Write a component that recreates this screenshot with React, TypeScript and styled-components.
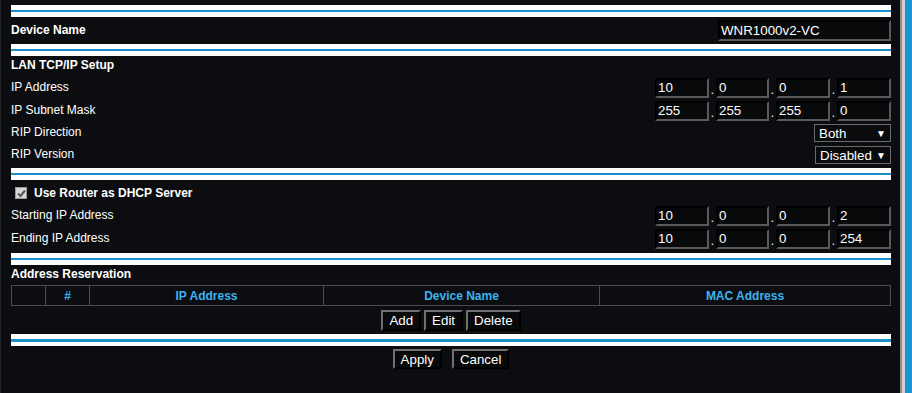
import React from "react";
import styled, { createGlobalStyle } from "styled-components";

const Global = createGlobalStyle`
  html, body { margin: 0; padding: 0; background: #0c0d10; }
  body { font-family: "Liberation Sans", Arial, sans-serif; color: #ffffff; }
  * { box-sizing: border-box; }
`;

const Page = styled.div`
  display: flex;
  width: 912px;
  height: 393px;
  overflow: hidden;
  background: #0c0d10;
`;

const Main = styled.div`
  width: 900px;
  height: 100%;
  border-left: 1px solid #222327;
  padding: 5px 0 0 10px;
`;

const Frame = styled.div`
  width: 12px;
  height: 100%;
  background: linear-gradient(
    to right,
    #8e8e8e 0 2px,
    #d0d0d0 2px 5px,
    #1a95d0 5px 12px
  );
`;

const Content = styled.div`
  width: 880px;
  display: flex;
  flex-direction: column;
`;

const Sep = styled.div<{ $mt?: number }>`
  height: 12px;
  margin-top: ${(p) => p.$mt ?? 0}px;
  background: linear-gradient(
    to bottom,
    #ffffff 0 5px,
    #1990cc 5px 7.5px,
    #ffffff 7.5px 12px
  );
`;

const Row = styled.div<{ $h: number; $pt?: number }>`
  display: flex;
  align-items: center;
  justify-content: space-between;
  height: ${(p) => p.$h}px;
  padding-top: ${(p) => p.$pt ?? 0}px;
`;

const Label = styled.span<{ $bold?: boolean }>`
  font-size: 12px;
  font-weight: ${(p) => (p.$bold ? "bold" : "normal")};
  color: #ffffff;
  padding-bottom: 2px;
`;

const TextInput = styled.input<{ $w: number; $h: number }>`
  width: ${(p) => p.$w}px;
  height: ${(p) => p.$h}px;
  margin: 0;
  padding: 0 1px;
  background: #08090b;
  color: #ffffff;
  font-family: "Liberation Sans", Arial, sans-serif;
  font-size: 13.333px;
  border-style: solid;
  border-width: 2px;
  border-color: #000000 #5a5a5a #5a5a5a #000000;
  outline: none;
`;

const IpGroup = styled.div`
  display: grid;
  grid-template-columns: 54px 7px 53px 7px 54px 7px 54px;
  align-items: end;
  height: 20px;
`;

const Dot = styled.span`
  font-size: 12px;
  line-height: 10px;
  text-align: center;
  color: #ffffff;
  padding-bottom: 3px;
`;

const Select = styled.div<{ $w: number }>`
  width: ${(p) => p.$w}px;
  height: 18px;
  border: 1px solid #6a6a6a;
  background: #0a0b0d;
  display: flex;
  align-items: center;
  justify-content: space-between;
  padding: 0 4px 0 4px;
  font-size: 13.333px;
  color: #ffffff;
`;

const Arrow = styled.span`
  font-size: 10px;
  color: #ffffff;
`;

const CheckLine = styled.label`
  display: flex;
  align-items: center;
  gap: 7px;
  padding-left: 4px;
  padding-bottom: 2px;
  font-size: 12px;
  font-weight: bold;
`;

const CheckBox = styled.span`
  display: flex;
  align-items: center;
  justify-content: center;
  width: 12px;
  height: 12px;
  background: #d6d6d6;
  border: 1px solid #9a9a9a;
`;

const Table = styled.table`
  width: 879px;
  border-collapse: collapse;
  table-layout: fixed;
`;

const Th = styled.th<{ $w: number }>`
  width: ${(p) => p.$w}px;
  height: 20px;
  padding: 0;
  border: 1px solid #4d4d4d;
  color: #3db3f0;
  font-size: 12px;
  font-weight: bold;
  text-align: center;
  vertical-align: middle;
`;

const ButtonRow = styled.div<{ $h: number; $pt: number; $gap: number }>`
  display: flex;
  justify-content: center;
  gap: ${(p) => p.$gap}px;
  height: ${(p) => p.$h}px;
  padding-top: ${(p) => p.$pt}px;
`;

const Button = styled.button<{ $h: number }>`
  height: ${(p) => p.$h}px;
  margin: 0;
  padding: 0 6px;
  background: #08090b;
  color: #ffffff;
  font-family: "Liberation Sans", Arial, sans-serif;
  font-size: 13.333px;
  border-style: solid;
  border-width: 2px;
  border-color: #707070 #000000 #000000 #707070;
  cursor: pointer;
`;

const Ip = ({ v }: { v: string[] }) => (
  <IpGroup>
    <TextInput $w={54} $h={20} defaultValue={v[0]} />
    <Dot>.</Dot>
    <TextInput $w={53} $h={20} defaultValue={v[1]} />
    <Dot>.</Dot>
    <TextInput $w={54} $h={20} defaultValue={v[2]} />
    <Dot>.</Dot>
    <TextInput $w={54} $h={20} defaultValue={v[3]} />
  </IpGroup>
);

export default function App() {
  return (
    <>
      <Global />
      <Page>
        <Main>
          <Content>
            <Sep />
            <Row $h={27}>
              <Label $bold>Device Name</Label>
              <TextInput $w={173} $h={21} defaultValue="WNR1000v2-VC" />
            </Row>
            <Sep />
            <Row $h={20}>
              <Label $bold>LAN TCP/IP Setup</Label>
            </Row>
            <Row $h={23}>
              <Label>IP Address</Label>
              <Ip v={["10", "0", "0", "1"]} />
            </Row>
            <Row $h={23}>
              <Label>IP Subnet Mask</Label>
              <Ip v={["255", "255", "255", "0"]} />
            </Row>
            <Row $h={22}>
              <Label>RIP Direction</Label>
              <Select $w={77}>
                <span>Both</span>
                <Arrow>▼</Arrow>
              </Select>
            </Row>
            <Row $h={22}>
              <Label>RIP Version</Label>
              <Select $w={76}>
                <span>Disabled</span>
                <Arrow>▼</Arrow>
              </Select>
            </Row>
            <Sep $mt={2} />
            <Row $h={24} $pt={4}>
              <CheckLine>
                <CheckBox>
                  <svg width="9" height="9" viewBox="0 0 9 9">
                    <path
                      d="M1 4.5 L3.5 7 L8 1.5"
                      fill="none"
                      stroke="#555555"
                      strokeWidth="2"
                    />
                  </svg>
                </CheckBox>
                Use Router as DHCP Server
              </CheckLine>
            </Row>
            <Row $h={23}>
              <Label>Starting IP Address</Label>
              <Ip v={["10", "0", "0", "2"]} />
            </Row>
            <Row $h={23}>
              <Label>Ending IP Address</Label>
              <Ip v={["10", "0", "0", "254"]} />
            </Row>
            <Sep $mt={3} />
            <Row $h={20}>
              <Label $bold>Address Reservation</Label>
            </Row>
            <Table>
              <thead>
                <tr>
                  <Th $w={34}></Th>
                  <Th $w={44}>#</Th>
                  <Th $w={234}>IP Address</Th>
                  <Th $w={276}>Device Name</Th>
                  <Th $w={291}>MAC Address</Th>
                </tr>
              </thead>
            </Table>
            <ButtonRow $h={28} $pt={4} $gap={3}>
              <Button $h={21}>Add</Button>
              <Button $h={21}>Edit</Button>
              <Button $h={21}>Delete</Button>
            </ButtonRow>
            <Sep />
            <ButtonRow $h={26} $pt={3} $gap={10}>
              <Button $h={20}>Apply</Button>
              <Button $h={20}>Cancel</Button>
            </ButtonRow>
          </Content>
        </Main>
        <Frame />
      </Page>
    </>
  );
}
